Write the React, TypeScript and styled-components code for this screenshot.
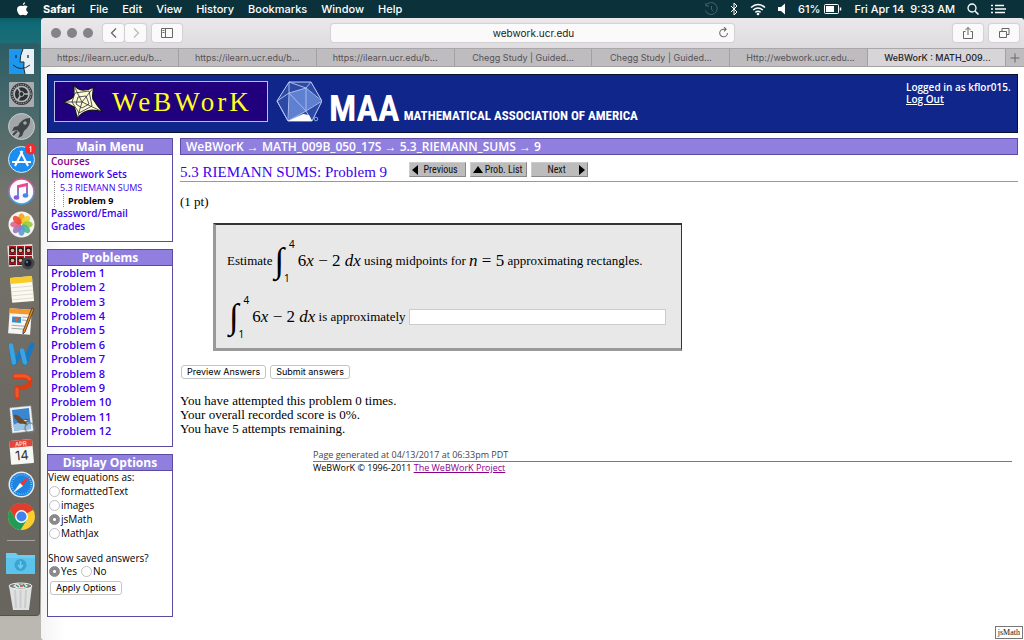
import React from "react";
import styled, { createGlobalStyle } from "styled-components";

const sans = '"Inter", "Liberation Sans", sans-serif';
const humanist = '"Open Sans", "Noto Sans", sans-serif';
const serif = '"Liberation Serif", "Times New Roman", serif';
const narrow = '"Roboto Condensed", "Roboto", sans-serif';

const Global = createGlobalStyle`
  * { box-sizing: border-box; }
  body { margin: 0; background: #fff; color: #000; }
  button, input { font: inherit; }
  a { color: #3a00f0; text-decoration: none; }
`;

const Desktop = styled.div`
  min-height: 100vh;
  display: flex;
  flex-direction: column;
  background: linear-gradient(#08303a 0, #0e6a76 24px, #2a7078 60px, #77776f 220px, #6f6c66 560px, #bbb8b1 620px);
`;

/* ---------- menu bar ---------- */
const MenuBar = styled.header`
  height: 18px;
  display: flex;
  align-items: center;
  justify-content: space-between;
  padding: 0 18px 0 16px;
  background: #0b323b;
  color: #fff;
  font: 500 11px/18px ${sans};
`;
const MenuItems = styled.nav`
  display: flex;
  align-items: center;
  gap: 14px;
  strong { font-weight: 700; margin-right: 1px; }
`;
const StatusItems = styled.div`
  display: flex;
  align-items: center;
  gap: 12px;
  white-space: pre;
`;
const Pair = styled.span`
  display: flex;
  align-items: center;
  gap: 4px;
`;

/* ---------- dock ---------- */
const Workspace = styled.div`
  flex: 1;
  display: flex;
  align-items: stretch;
`;
const Dock = styled.aside`
  width: 40px;
  height: 573px;
  margin: 25px 1px 0 0;
  padding: 4px 4px 0 0;
  flex: none;
  display: flex;
  flex-direction: column;
  align-items: flex-end;
  border: 1px solid #4d5553;
  border-left: 0;
  border-radius: 0 4px 4px 0;
  background: linear-gradient(#2c5c64 0, #46686b 60px, #74746c 150px, #6d6a63 350px, #68655f 100%);
  svg { display: block; overflow: visible; }
`;
const DockApps = styled.div`
  height: 482px;
  display: flex;
  flex-direction: column;
  justify-content: space-between;
`;
const DockRule = styled.hr`
  width: 28px;
  margin: 10px 0 9px;
  border: 0;
  border-top: 1px solid #a5a39e;
`;
const DockPlaces = styled.div`
  display: flex;
  flex-direction: column;
  gap: 5px;
`;

/* ---------- browser window ---------- */
const BrowserWindow = styled.div`
  flex: 1;
  min-width: 0;
  display: flex;
  flex-direction: column;
  background: #fff;
  border-radius: 4px 4px 0 4px;
  overflow: hidden;
`;
const Toolbar = styled.div`
  height: 30px;
  display: grid;
  grid-template-columns: 1fr 41.5% 1fr;
  align-items: center;
  padding: 0 5px;
  background: linear-gradient(#ebe8eb, #dfdcdf);
`;
const ToolGroup = styled.div<{ $end?: boolean }>`
  display: flex;
  align-items: center;
  justify-content: ${(p) => (p.$end ? "flex-end" : "flex-start")};
  gap: 6px;
`;
const Lights = styled.div`
  display: flex;
  gap: 6px;
  margin: 0 4px 0 5px;
  span { width: 10px; height: 10px; border-radius: 50%; background: #858387; }
`;
const Joined = styled.div`
  display: flex;
  gap: 1px;
`;
const ToolButton = styled.button<{ $narrow?: boolean }>`
  width: ${(p) => (p.$narrow ? 21 : 30)}px;
  height: 18px;
  padding: 0;
  display: grid;
  place-items: center;
  border: 0;
  border-radius: 3px;
  background: #fbfafb;
  box-shadow: 0 0 1px 1px #d3d0d3;
`;
const AddressBar = styled.div`
  height: 18px;
  display: flex;
  align-items: center;
  padding: 0 4px 0 18px;
  border-radius: 3px;
  background: #fbfafb;
  box-shadow: 0 0 1px 1px #d3d0d3;
  input {
    flex: 1;
    min-width: 0;
    border: 0;
    padding: 0;
    background: none;
    text-align: center;
    font: 10px/16px ${sans};
    color: #222;
  }
  button { border: 0; padding: 0; background: none; display: grid; }
`;
const TabStrip = styled.div`
  height: 19px;
  display: flex;
  background: #bfbcbf;
  border-top: 1px solid #aaa7aa;
  border-bottom: 1px solid #a5a2a5;
`;
const Tab = styled.button<{ $active?: boolean }>`
  flex: 1;
  min-width: 0;
  padding: 0 16px;
  border: 0;
  border-right: 1px solid #a3a0a3;
  background: ${(p) => (p.$active ? "#d8d5d8" : "transparent")};
  color: ${(p) => (p.$active ? "#222" : "#555256")};
  font: ${(p) => (p.$active ? 500 : 400)} 9px/17px ${sans};
  white-space: nowrap;
`;
const NewTab = styled.button`
  width: 18px;
  padding: 0;
  border: 0;
  background: transparent;
  display: grid;
  place-items: center;
`;

/* ---------- WeBWorK page ---------- */
const Page = styled.div`
  flex: 1;
  padding: 7px 6px 20px;
  background: linear-gradient(90deg, #f4f4f4 0, #fff 24px);
`;
const Masthead = styled.div`
  height: 59px;
  display: flex;
  align-items: flex-start;
  padding: 6px;
  border: 1px solid #0a0f30;
  background: #10268a;
  color: #fff;
`;
const LogoBox = styled.a`
  width: 214px;
  height: 41px;
  display: flex;
  align-items: center;
  gap: 6px;
  padding-left: 7px;
  border: 1px solid #b9bde8;
  background: #20007c;
  color: #ffff20;
  font: 27px/40px ${serif};
  letter-spacing: 3px;
  svg { flex: none; }
`;
const MaaLink = styled.a`
  height: 45px;
  display: flex;
  align-items: flex-end;
  margin-left: 8px;
  color: #fff;
  svg { flex: none; align-self: flex-start; }
`;
const MaaShort = styled.span`
  margin-left: 7px;
  font: 700 36px/34px ${narrow};
`;
const MaaLong = styled.span`
  margin-left: 4px;
  font: 700 13px/20px ${narrow};
  white-space: nowrap;
`;
const LoginStatus = styled.div`
  margin-left: auto;
  width: 105px;
  font: 600 10px/12px ${humanist};
  white-space: nowrap;
  a { color: #fff; text-decoration: underline; }
`;
const Columns = styled.div`
  display: flex;
  align-items: flex-start;
  gap: 7px;
  padding-top: 5px;
`;
const Sidebar = styled.div`
  width: 126px;
  flex: none;
  display: flex;
  flex-direction: column;
  gap: 7px;
  font: 10px/13px ${humanist};
`;
const Panel = styled.section<{ $foot: number }>`
  border: 1px solid #5b4ba3;
  padding-bottom: ${(p) => p.$foot}px;
  background: #fff;
`;
const PanelTitle = styled.h2`
  margin: 0;
  height: 16px;
  border-bottom: 1px solid #5b4ba3;
  background: #917fe0;
  color: #fff;
  text-align: center;
  font: 700 12px/15px ${humanist};
`;
const LinkList = styled.ul`
  list-style: none;
  margin: 0;
  padding: 0 3px;
  font-weight: 600;
`;
const ProblemList = styled(LinkList)`
  height: 171px;
  display: flex;
  flex-direction: column;
  justify-content: space-between;
  font-size: 11px;
`;
const Nested = styled.ul`
  list-style: none;
  margin: 0 0 0 3px;
  padding: 0 0 0 5px;
  border-left: 1px dotted #888;
  font-size: 9px;
  font-weight: 400;
  ul { padding-left: 4px; font-weight: 700; }
`;
const Visited = styled.a`
  color: #8b008b;
`;
const Options = styled.form`
  fieldset { border: 0; margin: 0; padding: 0; }
  legend { padding: 0; }
`;
const Choice = styled.label<{ $tight?: boolean }>`
  display: flex;
  align-items: center;
  gap: 1px;
  height: ${(p) => (p.$tight ? 13 : 14)}px;
  margin-left: 1px;
`;
const Radio = styled.input`
  appearance: none;
  width: 11px;
  height: 11px;
  margin: 0;
  border: 1px solid #bdbdbd;
  border-radius: 50%;
  background: #fff;
  &:checked {
    border-color: #8a8a8d;
    background: radial-gradient(circle, #fff 0 1px, #8a8a8d 2px);
  }
`;
const ChoiceRow = styled.div`
  display: flex;
  gap: 3px;
`;
const PushButton = styled.button`
  height: 14px;
  padding: 0 5px;
  border: 1px solid #c4c4c4;
  border-radius: 3px;
  background: #fff;
  color: #000;
  font: 9px/12px ${sans};
  white-space: nowrap;
`;
const ApplyRow = styled.div`
  padding: 3px 0 0 2px;
  display: flex;
`;
const Gap = styled.div`
  height: 12px;
`;

const Main = styled.main`
  flex: 1;
  min-width: 0;
  font: 13px/14px ${serif};
`;
const Breadcrumb = styled.nav`
  height: 17px;
  padding-left: 5px;
  border: 1px solid #5b4ba3;
  background: #917fe0;
  color: #fff;
  font: 600 12px/15px ${humanist};
  white-space: nowrap;
  a { color: #fff; }
`;
const TitleRow = styled.div`
  display: flex;
  align-items: center;
  gap: 22px;
  height: 27px;
  border-bottom: 1px solid #999;
`;
const Title = styled.h1`
  margin: 8px 0 0;
  color: #3a00f0;
  font: 400 15px/20px ${serif};
  white-space: nowrap;
`;
const ProblemNav = styled.div`
  display: flex;
  gap: 4px;
  margin-top: 3px;
`;
const NavButton = styled.button`
  width: 57px;
  height: 15px;
  padding: 0 2px;
  display: flex;
  align-items: center;
  justify-content: space-between;
  border: 1px solid;
  border-color: #ccc #888 #888 #ccc;
  background: #bcbcbc;
  color: #111;
  font: 10px/13px ${narrow};
  white-space: nowrap;
  span { flex: 1; text-align: center; }
  svg { flex: none; }
`;
const Points = styled.p`
  margin: 13px 0 14px;
`;
const ProblemBox = styled.section`
  width: fit-content;
  margin-left: 33px;
  padding: 11px 15px 6px 11px;
  border: solid;
  border-width: 2px 1px 3px 3px;
  border-color: #333 #333 #999 #999;
  background: #e8e8e8;
`;
const MathLine = styled.div`
  display: flex;
  align-items: center;
  height: 50px;
  margin-bottom: 6px;
  white-space: pre;
  &:last-child { margin-bottom: 0; }
`;
const MathText = styled.span`
  font-size: 17px;
  line-height: 20px;
`;
const IntegralBox = styled.span`
  display: flex;
  align-items: center;
  height: 46px;
  margin: 0 3px 0 2px;
`;
const Sign = styled.span`
  font: 35px/46px ${serif};
`;
const Limits = styled.span`
  align-self: stretch;
  display: flex;
  flex-direction: column;
  justify-content: space-between;
  font: 10px/12px "Noto Sans", sans-serif;
  span:first-child { padding-left: 5px; }
`;
const Answer = styled.input`
  width: 257px;
  height: 16px;
  border: 1px solid #ccc;
  background: #fff;
`;
const SubmitRow = styled.div`
  display: flex;
  gap: 4px;
  margin: 14px 0 15px 1px;
`;
const Attempts = styled.p`
  margin: 0;
`;
const Footer = styled.footer`
  margin: 13px 6px 0 133px;
  font: 9px/12px ${humanist};
  color: #444;
  div + div { border-top: 1px solid #7a6fb5; color: #000; }
  a { color: #8b008b; text-decoration: underline; }
`;
const JsMathButton = styled.button`
  position: fixed;
  right: 1px;
  bottom: 1px;
  padding: 0 2px;
  border: 1px solid #777;
  background: #fff;
  color: #111;
  font: 8px/11px ${serif};
`;

/* ---------- dock drawings ---------- */
const Icon = ({ children }: { children: React.ReactNode }) => (
  <svg width="27" height="27" viewBox="0 0 27 27">{children}</svg>
);
const petals = ["#f7a21b", "#e9d52b", "#9bc93e", "#4fb58c", "#5a9bd8", "#9a77bd", "#d9678f", "#ee4b32"];

const dockIcons: React.ReactNode[] = [
  <Icon key="finder">
    <rect x="1" y="1" width="25" height="25" fill="#e8eff5" />
    <path d="M1 1h14q-3 6-3 13h4q-1 6 1 12H1z" fill="#1e96ee" />
    <path d="M8 7v3M20 7v3" stroke="#12303f" strokeWidth="1.3" />
    <path d="M5 17q8 7 17 0M15 1q-3 6-3 13h4q-1 6 1 12" stroke="#12303f" fill="none" />
  </Icon>,
  <Icon key="prefs">
    <rect x="1" y="1" width="25" height="25" rx="1" fill="#a9acae" />
    <circle cx="13.500" cy="13" r="11" fill="#2d3033" />
    <circle cx="13.500" cy="13" r="9.500" fill="none" stroke="#8d9194" strokeWidth="1.500" strokeDasharray="1.400 1" />
    <circle cx="13.500" cy="13" r="7.500" fill="none" stroke="#b7babc" strokeWidth="1.700" />
    <path d="M13.500 13H21M13.500 13l-4-6.500M13.500 13l-4 6.500" stroke="#b7babc" strokeWidth="1.700" />
    <circle cx="13.500" cy="13" r="2.500" fill="#2d3033" stroke="#b7babc" />
  </Icon>,
  <Icon key="launchpad">
    <circle cx="13.500" cy="13.500" r="13" fill="#a1a6a8" stroke="#c8ccce" />
    <path d="M22 5q-8 0-12 8l-4 1-2 4 5-1 3 3-2 5 4-2 2-5q7-5 6-13z" fill="#3e4447" />
    <circle cx="17" cy="10" r="1.800" fill="#a1a6a8" />
    <path d="M5 22l4-4" stroke="#3e4447" strokeWidth="2" />
  </Icon>,
  <Icon key="appstore">
    <circle cx="13.500" cy="13.500" r="13" fill="#1b8df0" stroke="#d8ecfb" />
    <path d="M14.500 5L7 20M12.500 5L20 20M4 16h19" stroke="#fff" strokeWidth="2" />
    <circle cx="22.500" cy="3" r="5.500" fill="#f32c30" />
    <path d="M21.500 1.500l1.300-1V6" stroke="#fff" fill="none" />
  </Icon>,
  <Icon key="itunes">
    <defs>
      <linearGradient id="tune" x2="0" y2="1"><stop stopColor="#f0468f" /><stop offset="1" stopColor="#2fa9f5" /></linearGradient>
    </defs>
    <circle cx="13.500" cy="13.500" r="12.500" fill="#fbfbfd" stroke="url(#tune)" strokeWidth="1.500" />
    <path d="M10 19V8l9-2v11" stroke="url(#tune)" strokeWidth="2" fill="none" />
    <path d="M10 9l9-2" stroke="#f0468f" strokeWidth="2" />
    <ellipse cx="8.500" cy="19.500" rx="2.800" ry="2.200" fill="#8a5be0" />
    <ellipse cx="17.500" cy="17.500" rx="2.800" ry="2.200" fill="#4c86ea" />
  </Icon>,
  <Icon key="photos">
    <circle cx="13.500" cy="13.500" r="13" fill="#f5f4f2" />
    {petals.map((c, i) => (
      <ellipse key={c} cx="13.500" cy="7.500" rx="3.300" ry="5.300" fill={c} opacity=".9" transform={`rotate(${i * 45} 13.500 13.500)`} />
    ))}
  </Icon>,
  <Icon key="booth">
    <rect x="0" y="2" width="25" height="21" fill="#eadcd8" transform="rotate(-4 12 12)" />
    {[1, 9, 17].map((x) => [3, 13].map((y) => (
      <g key={`${x}-${y}`}>
        <rect x={x} y={y} width="7" height="9" fill="#b5121c" />
        <circle cx={x + 3.500} cy={y + 4} r="2.800" fill="#241515" />
        <circle cx={x + 3.500} cy={y + 4.500} r="1.800" fill="#e2b096" />
        <path d={`M${x + 1} ${y + 9}q2.500-3 5 0z`} fill="#391c20" />
      </g>
    )))}
    <circle cx="20" cy="20" r="6.500" fill="#45484a" />
    <circle cx="20" cy="20" r="3.500" fill="#191c25" />
    <circle cx="19" cy="19" r="1.200" fill="#66729a" />
  </Icon>,
  <Icon key="notes">
    <g transform="rotate(-5 13 13)">
      <rect x="3" y="1" width="22" height="25" fill="#fcfaf0" />
      <rect x="3" y="1" width="22" height="6" fill="#f9cb27" />
      <path d="M3 11h22M3 15h22M3 19h22M3 23h22" stroke="#d6d2c4" strokeWidth=".7" />
    </g>
  </Icon>,
  <Icon key="pages">
    <g transform="rotate(4 13 13)">
      <rect x="1" y="1" width="22" height="25" fill="#f7f6f2" />
      <rect x="1" y="1" width="22" height="5" fill="#f49a2c" />
      <rect x="4" y="9" width="9" height="6" fill="#2c8fd2" />
      <path d="M6 10h5l-2.500 4z" fill="#e3602b" />
      <path d="M14 9h6M14 12h6M4 18h13M4 21h13" stroke="#a9a9a9" />
    </g>
    <path d="M24 0l2 1-9 23-2 2v-3z" fill="#e38a1d" stroke="#403428" strokeWidth=".8" />
  </Icon>,
  <Icon key="word">
    <path d="M3 5l3 17 8-12 3 12 7-18" stroke="#1a78c0" strokeWidth="5" fill="none" strokeLinejoin="round" strokeLinecap="round" />
    <path d="M3 4.500l3 17M14 9.500l3 12" stroke="#3aa3e0" strokeWidth="4.500" strokeLinecap="round" />
  </Icon>,
  <Icon key="powerpoint">
    <path d="M7 3.500h8q7 0 7 5t-7 6H9V24" stroke="#dc3c14" strokeWidth="5" fill="none" strokeLinejoin="round" strokeLinecap="round" />
    <path d="M7 3h8q5 0 6.500 3M9 16v7" stroke="#f4562a" strokeWidth="3" fill="none" strokeLinecap="round" />
  </Icon>,
  <Icon key="mail">
    <g transform="rotate(-6 13 13)">
      <rect x="3" y="1" width="21" height="25" fill="#f0f2f2" stroke="#ccd" strokeDasharray="1 1" />
      <rect x="5" y="3" width="17" height="21" fill="#3b86cf" />
      <path d="M5 18q8-4 17 0v6H5z" fill="#9cc5e6" />
      <path d="M6 8q5 0 8 5l7 1-3 3 1 3-4-2q-6 0-6-4-3-2-3-6z" fill="#6b4a2c" />
      <path d="M15 14l5 1-3 1z" fill="#ece0c8" />
    </g>
    <circle cx="22" cy="22" r="5" fill="none" stroke="#72777c" strokeWidth="1.500" opacity=".7" />
  </Icon>,
  <Icon key="calendar">
    <g transform="rotate(-5 13 13)">
      <rect x="2" y="2" width="23" height="24" rx="1" fill="#f7f7f5" />
      <rect x="2" y="2" width="23" height="7" fill="#e2453d" />
      <text x="13.500" y="8" fontSize="6" fontFamily="Inter, sans-serif" textAnchor="middle" fill="#fff">APR</text>
      <text x="13.500" y="22" fontSize="13" fontFamily="Inter, sans-serif" textAnchor="middle" fill="#333">14</text>
    </g>
  </Icon>,
  <Icon key="safari">
    <circle cx="13.500" cy="13.500" r="13" fill="#e7ecef" />
    <circle cx="13.500" cy="13.500" r="11.500" fill="#1d84e2" />
    <circle cx="13.500" cy="13.500" r="9.800" fill="none" stroke="#a9d6f6" strokeWidth="1.500" strokeDasharray=".6 1.500" />
    <path d="M22 5l-7 10-3-3z" fill="#f0342f" />
    <path d="M5 22l7-10 3 3z" fill="#f4f6f7" />
  </Icon>,
  <Icon key="chrome">
    <circle cx="13.500" cy="13.500" r="13.500" fill="#fbcd2e" />
    <path d="M13.500 13.500L1.800 6.800A13.500 13.500 0 0 1 25.200 6.800z" fill="#e23c2c" />
    <path d="M13.500 7H25.300A13.500 13.500 0 0 0 1.800 6.800l6 10z" fill="#e23c2c" />
    <path d="M1.800 6.800A13.500 13.500 0 0 0 12.500 27l6.500-10.500-11.200 0z" fill="#1f9d58" />
    <circle cx="13.500" cy="13.500" r="6.400" fill="#fff" />
    <circle cx="13.500" cy="13.500" r="5" fill="#3f83f0" />
  </Icon>,
];

const Ico = (p: { w?: number; h?: number; box?: string; color?: string; children: React.ReactNode }) => (
  <svg width={p.w ?? 14} height={p.h ?? 14} viewBox={p.box ?? "0 0 14 14"} fill="none" stroke={p.color ?? "#666"}>
    {p.children}
  </svg>
);

const Integral = () => (
  <IntegralBox>
    <Sign>∫</Sign>
    <Limits><span>4</span><span>1</span></Limits>
  </IntegralBox>
);
const Integrand = () => (
  <MathText>6<i>x</i> − 2 <i>dx</i></MathText>
);

const tabs = [
  "https://ilearn.ucr.edu/b...", "https://ilearn.ucr.edu/b...", "https://ilearn.ucr.edu/b...",
  "Chegg Study | Guided...", "Chegg Study | Guided...", "Http://webwork.ucr.edu...", "WeBWorK : MATH_009...",
];
const problems = Array.from({ length: 12 }, (_, i) => `Problem ${i + 1}`);

export default function App() {
  return (
    <Desktop>
      <Global />
      <MenuBar>
        <MenuItems>
          <Ico w={13} h={14} box="0 0 13 14">
            <path stroke="none" fill="#fff" d="M9.200 0Q9.300 2.500 6.700 3.200 6.600.8 9.200 0zM6.800 4Q9.500 2.700 11.700 4.800 10 6 10.200 7.800q.2 1.600 1.900 2.400Q10.800 13.500 9 13.200q-2.100-.8-4 0Q3.500 13.500 2 11 .2 7.800 1.400 5.400 3 2.900 6.800 4z" />
          </Ico>
          <strong>Safari</strong>
          {["File", "Edit", "View", "History", "Bookmarks", "Window", "Help"].map((m) => <span key={m}>{m}</span>)}
        </MenuItems>
        <StatusItems>
          <Ico color="#47646b"><path d="M2 3.500a6 6 0 1 1-.5 5M2 1v3h3M7.500 4v3.500l2 1.500" /></Ico>
          <Ico w={8} box="0 0 8 14" color="#fff"><path d="M1 4l6 6-3 3V1l3 3-6 6" /></Ico>
          <Ico w={16} box="0 0 16 14" color="#fff">
            <path strokeWidth="1.600" d="M1 5.500q7-6 14 0M3.200 8q4.800-4 9.600 0M5.400 10.300q2.600-2 5.200 0" />
            <circle cx="8" cy="12" r="1.300" fill="#fff" stroke="none" />
          </Ico>
          <Ico w={8} box="0 0 8 14" color="#fff"><path fill="#fff" stroke="none" d="M0 5h3l4-3.500v11L3 9H0z" /></Ico>
          <Pair>
            <span>61%</span>
            <Ico w={18} h={10} box="0 0 18 10" color="#fff">
              <rect x=".5" y=".5" width="14" height="9" rx="1" /><rect x="2" y="2" width="8" height="6" fill="#fff" stroke="none" />
              <path d="M16.500 3.500v3" strokeWidth="1.500" />
            </Ico>
          </Pair>
          <span>Fri Apr 14  9:33 AM</span>
          <Ico w={12} h={12} box="0 0 12 12" color="#fff"><circle cx="5" cy="5" r="4" strokeWidth="1.300" /><path d="M8 8l3.500 3.500" strokeWidth="1.500" /></Ico>
          <Ico w={15} h={10} box="0 0 15 10" color="#fff"><path strokeWidth="1.500" d="M0 1.500h2M4 1.500h9M0 5h2M4 5h11M0 8.500h2M4 8.500h10" /></Ico>
        </StatusItems>
      </MenuBar>
      <Workspace>
        <Dock>
          <DockApps>{dockIcons}</DockApps>
          <DockRule />
          <DockPlaces>
            <svg width="29" height="27" viewBox="0 0 29 27">
              <path d="M0 3h10l2 2h17v19H0z" fill="#6ccdf1" /><path d="M0 8h29v16H0z" fill="#5cc3ec" />
              <circle cx="14.500" cy="15" r="6" fill="#3aa3d0" /><path d="M14.500 11v6M12 15l2.500 3 2.500-3" stroke="#72cdf0" strokeWidth="1.500" fill="none" />
            </svg>
            <svg width="29" height="29" viewBox="0 0 29 29">
              <path d="M3 4h23l-3 24H7z" fill="#dfe0e0" /><path d="M9 8l1 18M14.500 8v18M20 8l-1 18" stroke="#cbcdcd" strokeWidth="2" />
              <ellipse cx="14.500" cy="4" rx="11.500" ry="3" fill="#747b78" stroke="#eee" />
              <path d="M7 4l4-3 3 2 4-2 4 3-3 2h-9z" fill="#e7e3df" /><path d="M10 3l3 2M17 2l2 3" stroke="#3a8f7c" strokeWidth="1.500" /><path d="M14 4h3" stroke="#c0392b" strokeWidth="1.500" />
            </svg>
          </DockPlaces>
        </Dock>
        <BrowserWindow>
          <Toolbar>
            <ToolGroup>
              <Lights><span /><span /><span /></Lights>
              <Joined>
                <ToolButton $narrow aria-label="Back"><Ico><path d="M9 2.500L4.500 7 9 11.500" strokeWidth="1.300" /></Ico></ToolButton>
                <ToolButton $narrow aria-label="Forward"><Ico color="#bbb"><path d="M5 2.500L9.500 7 5 11.500" strokeWidth="1.300" /></Ico></ToolButton>
              </Joined>
              <ToolButton aria-label="Show sidebar"><Ico><path d="M1.500 2.500h11v9h-11zM5.500 2.500v9M2.500 4.500h2M2.500 6.500h2" /></Ico></ToolButton>
            </ToolGroup>
            <AddressBar>
              <input aria-label="Address" defaultValue="webwork.ucr.edu" />
              <button aria-label="Reload"><Ico w={12} h={12}><path d="M11 7a4.500 4.500 0 1 1-4.500-4.500H9M7 0l2.500 2.500L7 5" strokeWidth="1.200" /></Ico></button>
            </AddressBar>
            <ToolGroup $end>
              <ToolButton aria-label="Share"><Ico><path d="M4.500 5.500h-2v7h9v-7h-2M7 9V1.500M4.500 4L7 1.500 9.500 4" /></Ico></ToolButton>
              <ToolButton aria-label="Show tabs"><Ico><path d="M2.500 5.500h7v6h-7zM5 5.500v-3h7v6H9.500" /></Ico></ToolButton>
            </ToolGroup>
          </Toolbar>
          <TabStrip>
            {tabs.map((t, i) => <Tab key={i} $active={i === 6}>{t}</Tab>)}
            <NewTab aria-label="New tab"><Ico w={10} h={10} box="0 0 10 10"><path d="M5 .5v9M.5 5h9" /></Ico></NewTab>
          </TabStrip>
          <Page>
            <Masthead>
              <LogoBox href="#">
                <svg width="44" height="38" viewBox="0 0 44 38">
                  <path d="M11 1q5 6 10 6 6 0 11-3-2 7-1 12 4 7 10 13-10-3-16-1-6 2-10 8-1-8-3-12-5-3-11-5 7-2 10-5 2-5 0-13z" fill="#fdfbd2" stroke="#15102a" strokeWidth="1.300" />
                  <path d="M11 1l9 18L32 4M20 19l21 10M20 19l-5 17M20 19H1M16 14l8-1 3 8-7 4-6-4zM13 10l14-2 3 15-13 7-7-11z" stroke="#15102a" strokeWidth=".7" fill="none" />
                </svg>
                WeBWorK
              </LogoBox>
              <MaaLink href="#">
                <svg width="46" height="42" viewBox="0 0 46 42">
                  <path d="M13 1h22l11 19-10 20H12L1 20z" fill="#2c49a6" stroke="#c4d2f5" />
                  <path d="M13 12l17-5 0 23-17 10zM30 7l15 13-15 10z" fill="#5f7fd0" />
                  <path d="M1 20l12-8 0-11 17 6 5-6M13 12l17-5 16 13-16 10L13 12l-1 28L1 20M12 40l18-10 6 10M30 7v23" fill="none" stroke="#a9bcec" />
                  <path d="M12 40l15-7 6 1 3 6z" fill="#fff" />
                  <circle cx="40" cy="38" r="1.800" fill="none" stroke="#8aa8e8" />
                </svg>
                <MaaShort>MAA</MaaShort>
                <MaaLong>MATHEMATICAL ASSOCIATION OF AMERICA</MaaLong>
              </MaaLink>
              <LoginStatus>Logged in as kflor015.<br /><a href="#">Log Out</a></LoginStatus>
            </Masthead>
            <Columns>
              <Sidebar>
                <Panel $foot={8}>
                  <PanelTitle>Main Menu</PanelTitle>
                  <LinkList>
                    <li><Visited href="#">Courses</Visited></li>
                    <li><a href="#">Homework Sets</a>
                      <Nested>
                        <li><a href="#">5.3 RIEMANN SUMS</a>
                          <Nested><li>Problem 9</li></Nested>
                        </li>
                      </Nested>
                    </li>
                    <li><a href="#">Password/Email</a></li>
                    <li><a href="#">Grades</a></li>
                  </LinkList>
                </Panel>
                <Panel $foot={9}>
                  <PanelTitle>Problems</PanelTitle>
                  <ProblemList>{problems.map((p) => <li key={p}><a href="#">{p}</a></li>)}</ProblemList>
                </Panel>
                <Panel $foot={21}>
                  <PanelTitle>Display Options</PanelTitle>
                  <Options onSubmit={(e) => e.preventDefault()}>
                    <fieldset>
                      <legend>View equations as:</legend>
                      {["formattedText", "images", "jsMath", "MathJax"].map((o) => (
                        <Choice key={o}><Radio type="radio" name="mode" defaultChecked={o === "jsMath"} />{o}</Choice>
                      ))}
                    </fieldset>
                    <Gap />
                    <fieldset>
                      <legend>Show saved answers?</legend>
                      <ChoiceRow>
                        <Choice $tight><Radio type="radio" name="saved" defaultChecked />Yes</Choice>
                        <Choice $tight><Radio type="radio" name="saved" />No</Choice>
                      </ChoiceRow>
                    </fieldset>
                    <ApplyRow><PushButton>Apply Options</PushButton></ApplyRow>
                  </Options>
                </Panel>
              </Sidebar>
              <Main>
                <Breadcrumb>
                  <a href="#">WeBWorK</a> → <a href="#">MATH_009B_050_17S</a> → <a href="#">5.3_RIEMANN_SUMS</a> → 9
                </Breadcrumb>
                <TitleRow>
                  <Title>5.3 RIEMANN SUMS: Problem 9</Title>
                  <ProblemNav>
                    <NavButton><Ico w={6} h={10} box="0 0 6 10"><path fill="#000" stroke="none" d="M6 0v10L0 5z" /></Ico><span>Previous</span></NavButton>
                    <NavButton><Ico w={10} h={7} box="0 0 10 7"><path fill="#000" stroke="none" d="M0 7h10L5 0z" /></Ico><span>Prob. List</span></NavButton>
                    <NavButton><span>Next</span><Ico w={6} h={10} box="0 0 6 10"><path fill="#000" stroke="none" d="M0 0v10l6-5z" /></Ico></NavButton>
                  </ProblemNav>
                </TitleRow>
                <Points>(1 pt)</Points>
                <ProblemBox>
                  <MathLine>
                    Estimate<Integral /><Integrand /> using midpoints for <MathText><i>n</i> = 5</MathText> approximating rectangles.
                  </MathLine>
                  <MathLine>
                    <Integral /><Integrand /><label htmlFor="answer"> is approximately </label><Answer id="answer" />
                  </MathLine>
                </ProblemBox>
                <SubmitRow>
                  <PushButton>Preview Answers</PushButton>
                  <PushButton>Submit answers</PushButton>
                </SubmitRow>
                <Attempts>
                  You have attempted this problem 0 times.<br />
                  Your overall recorded score is 0%.<br />
                  You have 5 attempts remaining.
                </Attempts>
                <Footer>
                  <div>Page generated at 04/13/2017 at 06:33pm PDT</div>
                  <div>WeBWorK © 1996-2011 <a href="#">The WeBWorK Project</a></div>
                </Footer>
              </Main>
            </Columns>
          </Page>
        </BrowserWindow>
      </Workspace>
      <JsMathButton>jsMath</JsMathButton>
    </Desktop>
  );
}
